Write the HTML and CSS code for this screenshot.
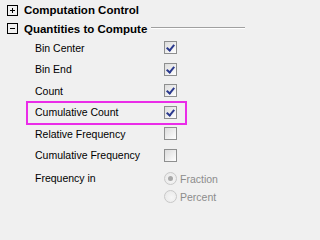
FILE: index.html
```html
<!DOCTYPE html>
<html>
<head>
<meta charset="utf-8">
<link rel="stylesheet" href="styles.css">
</head>
<body>
<div class="tree">
  <div class="header first">
    <span class="toggle"><svg width="11" height="11" viewBox="0 0 11 11"><rect x="0.5" y="0.5" width="10" height="10" fill="none" stroke="#000"/><path d="M3 5.5H8M5.5 3V8" stroke="#000"/></svg></span>
    <span class="title">Computation Control</span>
  </div>
  <div class="header second">
    <span class="toggle"><svg width="11" height="11" viewBox="0 0 11 11"><rect x="0.5" y="0.5" width="10" height="10" fill="none" stroke="#000"/><path d="M3 5.5H8" stroke="#000"/></svg></span>
    <span class="title">Quantities to Compute</span>
    <span class="rule"></span>
  </div>
  <div class="items">
    <div class="row"><span class="label">Bin Center</span><span class="cb checked"></span></div>
    <div class="row"><span class="label">Bin End</span><span class="cb checked"></span></div>
    <div class="row"><span class="label">Count</span><span class="cb checked"></span></div>
    <div class="row marked"><span class="label">Cumulative Count</span><span class="cb checked"></span><span class="mark"></span></div>
    <div class="row"><span class="label">Relative Frequency</span><span class="cb"></span></div>
    <div class="row"><span class="label">Cumulative Frequency</span><span class="cb"></span></div>
    <div class="row radios">
      <span class="label">Frequency in</span>
      <div class="group">
        <div class="opt"><span class="radio on"></span><span class="optlabel">Fraction</span></div>
        <div class="opt"><span class="radio"></span><span class="optlabel">Percent</span></div>
      </div>
    </div>
  </div>
</div>
</body>
</html>
```
FILE: styles.css
```css
html, body {
  margin: 0;
  padding: 0;
  background: #f0f0f0;
}
body {
  width: 245px;
  height: 208px;
  overflow: hidden;
  font-family: "Liberation Sans", Arial, sans-serif;
  font-size: 10.5px;
  color: #000;
}
.tree {
  display: flex;
  flex-direction: column;
}
.header {
  display: flex;
  align-items: center;
  padding-left: 7px;
}
.header.first { height: 20px; }
.header.second { height: 17px; }
.toggle {
  display: flex;
  width: 11px;
  height: 11px;
}
.title {
  font-weight: bold;
  font-size: 11.5px;
  margin-left: 6px;
  white-space: nowrap;
}
.rule {
  flex: 1;
  height: 1px;
  background: #a0a0a0;
  border-bottom: 1px solid #ffffff;
  margin-left: 4px;
  margin-top: -1px;
}
.items {
  display: flex;
  flex-direction: column;
}
.row {
  position: relative;
  height: 21.5px;
  display: grid;
  grid-template-columns: 129px 13px;
  align-items: center;
  padding-left: 35px;
}
.label { white-space: nowrap; }
.cb {
  width: 11px;
  height: 11px;
  border: 1px solid #8e8f8f;
  background: linear-gradient(135deg, #dcdcdc 0%, #f4f4f4 70%, #ffffff 100%);
  position: relative;
}
.cb.checked::after {
  content: "";
  position: absolute;
  left: 3px;
  top: 1px;
  width: 3px;
  height: 6px;
  border-right: 2px solid #2b3a8e;
  border-bottom: 2px solid #2b3a8e;
  transform: rotate(40deg);
}
.mark {
  position: absolute;
  left: 26px;
  top: -1px;
  width: 157px;
  height: 20px;
  border: 2px solid #ea2ce8;
}
.row.radios {
  height: auto;
  align-items: start;
  padding-top: 5px;
}
.row.radios .label { line-height: 15px; }
.group {
  display: flex;
  flex-direction: column;
  gap: 3px;
}
.opt {
  display: flex;
  align-items: center;
  height: 15px;
}
.radio {
  flex: none;
  width: 11px;
  height: 11px;
  border-radius: 50%;
  border: 1px solid #c8c8c8;
  background: radial-gradient(circle at 60% 60%, #f6f6f6 0%, #e6e6e6 100%);
  position: relative;
}
.radio.on::after {
  content: "";
  position: absolute;
  left: 3px;
  top: 3px;
  width: 5px;
  height: 5px;
  border-radius: 50%;
  background: #a8a8a8;
}
.optlabel {
  color: #8c8c8c;
  margin-left: 3px;
  white-space: nowrap;
}
```
